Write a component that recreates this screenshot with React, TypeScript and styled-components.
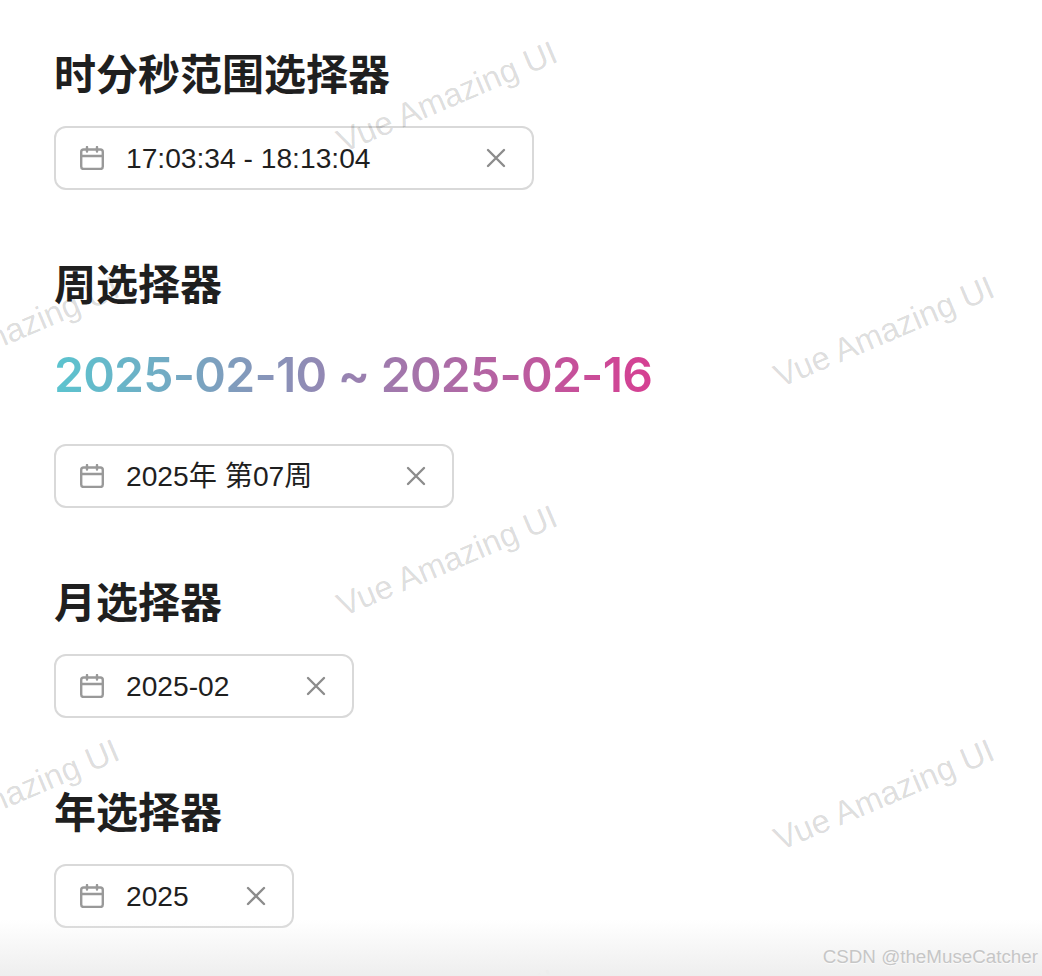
import React from 'react';
import styled, { createGlobalStyle } from 'styled-components';

const Global = createGlobalStyle`
  html, body { margin: 0; padding: 0; background: #fff; }
`;

const Page = styled.div`
  position: relative;
  width: 1042px;
  height: 976px;
  overflow: hidden;
  background: #fff;
  box-sizing: border-box;
  padding: 44px 0 0 54px;
  display: flex;
  flex-direction: column;
  gap: 64px;
  font-family: "Liberation Sans", "Noto Sans CJK SC", Arial, sans-serif;
  color: #1f1f1f;
`;

const Section = styled.section`
  display: flex;
  flex-direction: column;
  align-items: flex-start;
`;

const Heading = styled.h2`
  margin: 0 0 26px;
  font-family: "Noto Sans CJK SC", sans-serif;
  font-size: 42px;
  line-height: 56px;
  font-weight: 700;
  color: #1f1f1f;
`;

const GradientText = styled.div`
  margin: 9px 0 39px;
  font-family: Inter, "Liberation Sans", sans-serif;
  font-size: 48px;
  line-height: 60px;
  font-weight: 600;
  letter-spacing: -0.74px;
  white-space: nowrap;
  background: linear-gradient(90deg, #5bc4cf 0%, #d63f92 100%);
  -webkit-background-clip: text;
  background-clip: text;
  color: transparent;
`;

const Picker = styled.div<{ $width: number }>`
  width: ${p => p.$width}px;
  height: 64px;
  box-sizing: border-box;
  border: 2px solid #d9d9d9;
  border-radius: 12px;
  background: transparent;
  display: flex;
  align-items: center;
  padding: 0 24px;
  gap: 22px;
`;

const Value = styled.span`
  flex: 1;
  font-size: 28.2px;
  line-height: 40px;
  color: #1f1f1f;
  white-space: nowrap;
`;

const IconSvg = styled.svg`
  flex: none;
  display: block;
  width: 24px;
  height: 24px;
  fill: none;
  stroke-linecap: round;
`;

const Watermarks = styled.div`
  position: absolute;
  inset: 0;
  pointer-events: none;
`;

const Mark = styled.span<{ $x: number; $y: number }>`
  position: absolute;
  left: ${p => p.$x}px;
  top: ${p => p.$y}px;
  transform: translate(-50%, -50%) rotate(-23deg);
  font-family: "Liberation Sans", Arial, sans-serif;
  font-size: 33px;
  line-height: 40px;
  white-space: nowrap;
  color: rgba(0, 0, 0, 0.15);
`;

const BottomFade = styled.div`
  position: absolute;
  left: 0;
  right: 0;
  bottom: 0;
  height: 56px;
  background: linear-gradient(180deg, rgba(238, 238, 238, 0) 0%, rgba(238, 238, 238, 1) 100%);
  pointer-events: none;
`;

const Credit = styled.span`
  position: absolute;
  right: 4px;
  bottom: 8px;
  font-family: "Liberation Sans", Arial, sans-serif;
  font-size: 18.8px;
  line-height: 22px;
  color: #c6c6c6;
  text-shadow: 0 1px 1px rgba(255, 255, 255, 0.7);
  white-space: nowrap;
`;

const CalendarIcon = () => (
  <IconSvg viewBox="0 0 24 24" stroke="#999" strokeWidth="2.4">
    <rect x="1.2" y="3.5" width="21.6" height="19.5" rx="2.5" />
    <path d="M1.2 10H22.8M7 1V5.5M17 1V5.5" />
  </IconSvg>
);

const ClearIcon = () => (
  <IconSvg viewBox="0 0 24 24" stroke="#8c8c8c" strokeWidth="2.4">
    <path d="M4 4L20 20M20 4L4 20" />
  </IconSvg>
);

const DateField = ({ width, value }: { width: number; value: string }) => (
  <Picker $width={width}>
    <CalendarIcon />
    <Value>{value}</Value>
    <ClearIcon />
  </Picker>
);

const marks = [
  [447, 97], [884, 332], [9, 332], [447, 561], [884, 795], [9, 795], [447, 1025],
];

export default function App() {
  return (
    <Page>
      <Global />
      <Section>
        <Heading>时分秒范围选择器</Heading>
        <DateField width={480} value="17:03:34 - 18:13:04" />
      </Section>
      <Section>
        <Heading>周选择器</Heading>
        <GradientText>2025-02-10 ~ 2025-02-16</GradientText>
        <DateField width={400} value="2025年 第07周" />
      </Section>
      <Section>
        <Heading>月选择器</Heading>
        <DateField width={300} value="2025-02" />
      </Section>
      <Section>
        <Heading>年选择器</Heading>
        <DateField width={240} value="2025" />
      </Section>
      <Watermarks>
        {marks.map(([x, y]) => (
          <Mark key={`${x}-${y}`} $x={x} $y={y}>Vue Amazing UI</Mark>
        ))}
      </Watermarks>
      <BottomFade />
      <Credit>CSDN @theMuseCatcher</Credit>
    </Page>
  );
}
